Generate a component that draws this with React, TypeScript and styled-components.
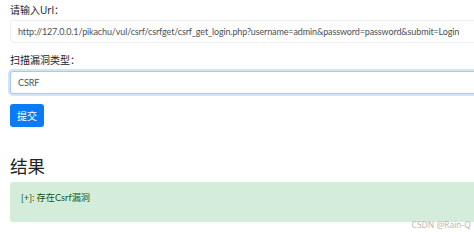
import React from "react";
import styled, { createGlobalStyle } from "styled-components";

const GlobalStyle = createGlobalStyle`
  html, body {
    margin: 0;
    padding: 0;
    background: #fff;
    overflow: hidden;
  }
  body {
    font-family: "Lato", "Noto Sans CJK SC", sans-serif;
    color: #212529;
  }
`;

export default function App() {
  return (
    <>
      <GlobalStyle />
      <Page>
        <Field>
          <Label>请输入Url：</Label>
          <Input
            type="text"
            defaultValue="http://127.0.0.1/pikachu/vul/csrf/csrfget/csrf_get_login.php?username=admin&password=password&submit=Login"
          />
        </Field>

        <Field>
          <Label>扫描漏洞类型：</Label>
          <Input type="text" defaultValue="CSRF" $focused />
        </Field>

        <SubmitButton>提交</SubmitButton>

        <ResultTitle>结果</ResultTitle>
        <Alert>[+]: 存在Csrf漏洞</Alert>
      </Page>
      <Watermark>CSDN @Rain-Q</Watermark>
    </>
  );
}

const Page = styled.div`
  display: flex;
  flex-direction: column;
  align-items: flex-start;
  width: 100vw;
  padding: 3px 0 0 10px;
  box-sizing: border-box;
`;

const Field = styled.div`
  display: flex;
  flex-direction: column;
  gap: 3px;
  width: calc(100% + 20px);
  margin-bottom: 10px;
`;

const Label = styled.label`
  font-family: "Noto Sans", "Noto Sans CJK SC", sans-serif;
  font-size: 10px;
  line-height: 14px;
`;

const Input = styled.input<{ $focused?: boolean }>`
  box-sizing: border-box;
  width: 100%;
  height: 23px;
  margin-top: ${(p) => (p.$focused ? "1px" : "0")};
  padding: 0 7px;
  font-family: "Lato", "Noto Sans CJK SC", sans-serif;
  font-size: 9px;
  letter-spacing: -0.13px;
  color: #495057;
  background: #fff;
  border: 1px solid ${(p) => (p.$focused ? "#a6c9f2" : "#eceef0")};
  border-radius: 3px;
  outline: none;
  box-shadow: ${(p) => (p.$focused ? "0 0 0 2px rgba(170, 205, 245, 0.55)" : "none")};
`;

const SubmitButton = styled.button`
  padding: 0 7px;
  height: 23px;
  border: none;
  border-radius: 3px;
  background: #0a7bf6;
  color: #fff;
  font-family: "Noto Sans CJK SC", sans-serif;
  font-size: 10px;
  cursor: pointer;
`;

const ResultTitle = styled.h2`
  margin: 28px 0 6px;
  font-family: "Noto Sans CJK SC", sans-serif;
  font-weight: 400;
  font-size: 17.5px;
  line-height: 21px;
  color: #222;
`;

const Alert = styled.div`
  box-sizing: border-box;
  width: calc(100% + 20px);
  height: 40px;
  padding: 9px 11px;
  background: #d4edda;
  border-radius: 3px;
  color: #155724;
  font-family: "Lato", "Noto Sans CJK SC", sans-serif;
  font-size: 9.2px;
  line-height: 14px;
`;

const Watermark = styled.div`
  position: absolute;
  right: 3px;
  bottom: 2px;
  font-family: "Noto Sans", sans-serif;
  font-size: 8.5px;
  color: #b8b8b8;
`;
